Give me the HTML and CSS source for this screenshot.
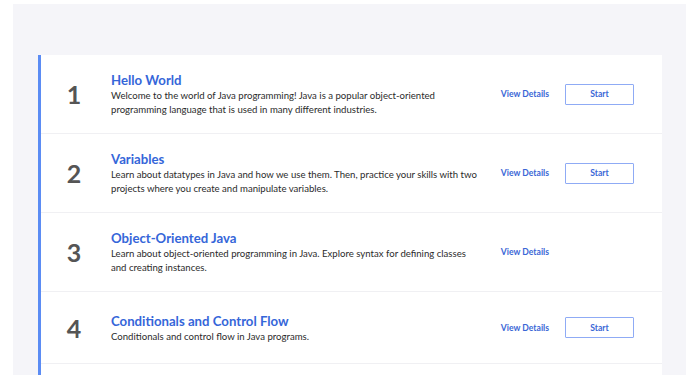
FILE: index.html
```html
<!DOCTYPE html>
<html lang="en">
<head>
<meta charset="utf-8">
<title>Java Course</title>
<link rel="stylesheet" href="styles.css">
</head>
<body>
<div class="page">
  <div class="panel">
    <div class="card">
      <div class="row">
        <div class="num">1</div>
        <div class="text">
          <div class="title">Hello World</div>
          <p class="desc">Welcome to the world of Java programming! Java is a popular object-oriented programming language that is used in many different industries.</p>
        </div>
        <div class="actions">
          <a class="details">View Details</a>
          <button class="start">Start</button>
        </div>
      </div>
      <div class="row">
        <div class="num">2</div>
        <div class="text">
          <div class="title">Variables</div>
          <p class="desc">Learn about datatypes in Java and how we use them. Then, practice your skills with two projects where you create and manipulate variables.</p>
        </div>
        <div class="actions">
          <a class="details">View Details</a>
          <button class="start">Start</button>
        </div>
      </div>
      <div class="row">
        <div class="num">3</div>
        <div class="text">
          <div class="title">Object-Oriented Java</div>
          <p class="desc">Learn about object-oriented programming in Java. Explore syntax for defining classes and creating instances.</p>
        </div>
        <div class="actions">
          <a class="details">View Details</a>
          <button class="start hidden">Start</button>
        </div>
      </div>
      <div class="row">
        <div class="num">4</div>
        <div class="text">
          <div class="title">Conditionals and Control Flow</div>
          <p class="desc">Conditionals and control flow in Java programs.</p>
        </div>
        <div class="actions">
          <a class="details">View Details</a>
          <button class="start">Start</button>
        </div>
      </div>
    </div>
  </div>
</div>
</body>
</html>
```
FILE: styles.css
```css
html, body {
  margin: 0;
  padding: 0;
  background: #ffffff;
  font-family: Lato, "Noto Sans", Arial, sans-serif;
}
.page {
  padding: 4px 14px 0 13px;
}
.panel {
  background: #f5f5f9;
  padding: 51px 24px 0 25px;
  min-height: 400px;
}
.card {
  background: #ffffff;
  border-left: 3px solid #5b8cf4;
  padding-bottom: 40px;
}
.row {
  display: grid;
  grid-template-columns: 66px 1fr auto;
  column-gap: 4px;
  align-items: center;
  box-sizing: border-box;
  min-height: 72px;
  padding: 16px 28px 16px 0;
  border-bottom: 1px solid #f0f0f3;
}
.num {
  text-align: center;
  font-size: 25px;
  font-weight: 700;
  color: #555555;
}
.text {
  padding-right: 16px;
}
.title {
  font-size: 13.2px;
  line-height: 18px;
  font-weight: 700;
  color: #3566d9;
}
.desc {
  margin: 0;
  font-size: 9.6px;
  line-height: 14px;
  color: #2b2b2b;
}
.actions {
  display: flex;
  align-items: center;
  gap: 16px;
}
.details {
  font-size: 8.6px;
  font-weight: 700;
  color: #3a67d6;
  white-space: nowrap;
}
.start {
  width: 69px;
  height: 21px;
  box-sizing: border-box;
  background: #ffffff;
  border: 1px solid #8fabf5;
  border-radius: 1px;
  font-family: inherit;
  font-size: 8.6px;
  font-weight: 700;
  color: #3a67d6;
  padding: 0;
}
.hidden {
  visibility: hidden;
}
```
